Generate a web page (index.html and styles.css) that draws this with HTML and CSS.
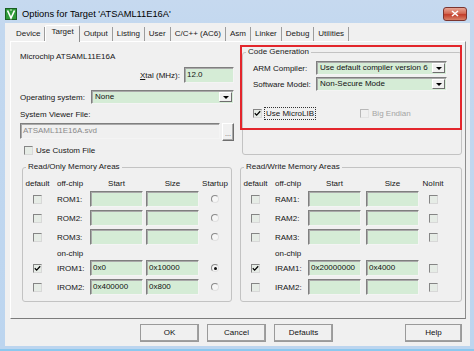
FILE: index.html
```html
<!DOCTYPE html>
<html>
<head>
<meta charset="utf-8">
<title>Options for Target</title>
<link rel="stylesheet" href="styles.css">
</head>
<body>
<div class="window">
  <div class="titlebar">
    <svg class="appicon" viewBox="0 0 12 12" width="12" height="12">
      <rect x="0.5" y="0.5" width="11" height="11" fill="#2f9a3a" stroke="#1b5e22"/>
      <path d="M2.5 2.5 L6 10 L9.5 2.5" fill="none" stroke="#fff" stroke-width="1.6"/>
      <path d="M5 2 L7 2" stroke="#cfe9c0" stroke-width="1"/>
    </svg>
    <span class="title">Options for Target 'ATSAML11E16A'</span>
    <div class="close">
      <svg viewBox="0 0 8 7" width="8" height="7"><path d="M1 1 L7 6 M7 1 L1 6" stroke="#fff" stroke-width="1.6"/></svg>
    </div>
  </div>

  <div class="client">
    <div class="tabs">
      <span class="tab">Device</span>
      <span class="tab active">Target</span>
      <span class="tab">Output</span>
      <span class="tab">Listing</span>
      <span class="tab">User</span>
      <span class="tab">C/C++ (AC6)</span>
      <span class="tab">Asm</span>
      <span class="tab">Linker</span>
      <span class="tab">Debug</span>
      <span class="tab">Utilities</span>
    </div>

    <div class="panel">
      <div class="top">
        <div class="leftcol">
          <div class="device">Microchip ATSAML11E16A</div>
          <div class="xtal-row">
            <span class="xtal-lbl"><u>X</u>tal (MHz):</span>
            <div class="field xtal-in">12.0</div>
          </div>
          <div class="os-row">
            <span class="os-lbl">Operating system:</span>
            <div class="select os-sel"><span class="sel-text">None</span><span class="arrow"></span></div>
          </div>
          <div class="svf-lbl">System Viewer File:</div>
          <div class="svf-row">
            <div class="field disabled svf-in">ATSAML11E16A.svd</div>
            <div class="dots">...</div>
          </div>
          <div class="custom-row">
            <span class="cb"></span><span class="cb-lbl">Use Custom File</span>
          </div>
        </div>

        <fieldset class="group codegen">
          <legend>Code Generation</legend>
          <div class="cg-body">
            <div class="cg-row">
              <span class="cg-lbl">ARM Compiler:</span>
              <div class="select cg-sel"><span class="sel-text">Use default compiler version 6</span><span class="arrow"></span></div>
            </div>
            <div class="cg-row second">
              <span class="cg-lbl">Software Model:</span>
              <div class="select cg-sel"><span class="sel-text">Non-Secure Mode</span><span class="arrow"></span></div>
            </div>
            <div class="cg-checks">
              <span class="cb checked"><svg viewBox="0 0 9 9" width="7" height="7"><path d="M1 4.2 L3.4 6.6 L8 1.6" fill="none" stroke="#000" stroke-width="1.6"/></svg></span>
              <span class="cb-lbl focus">Use MicroLIB</span>
              <span class="cb off"></span>
              <span class="cb-lbl grey">Big Endian</span>
            </div>
          </div>
        </fieldset>
      </div>

      <div class="mem">
        <fieldset class="group ro">
          <legend>Read/Only Memory Areas</legend>
          <div class="memgrid ro-grid">
            <span class="hd c">default</span><span class="hd l">off-chip</span><span class="hd in">Start</span><span class="hd in">Size</span><span class="hd c">Startup</span>

            <span class="cell c"><span class="cb"></span></span><span class="cell l">ROM1:</span><span class="field mem-in"></span><span class="field mem-in"></span><span class="cell c"><span class="radio"></span></span>
            <span class="cell c"><span class="cb"></span></span><span class="cell l">ROM2:</span><span class="field mem-in"></span><span class="field mem-in"></span><span class="cell c"><span class="radio"></span></span>
            <span class="cell c"><span class="cb"></span></span><span class="cell l">ROM3:</span><span class="field mem-in"></span><span class="field mem-in"></span><span class="cell c"><span class="radio"></span></span>

            <span class="onchip">on-chip</span>

            <span class="cell c"><span class="cb checked"><svg viewBox="0 0 9 9" width="7" height="7"><path d="M1 4.2 L3.4 6.6 L8 1.6" fill="none" stroke="#000" stroke-width="1.6"/></svg></span></span><span class="cell l">IROM1:</span><span class="field mem-in">0x0</span><span class="field mem-in">0x10000</span><span class="cell c"><span class="radio on"></span></span>
            <span class="cell c"><span class="cb"></span></span><span class="cell l">IROM2:</span><span class="field mem-in">0x400000</span><span class="field mem-in">0x800</span><span class="cell c"><span class="radio"></span></span>
          </div>
        </fieldset>

        <fieldset class="group rw">
          <legend>Read/Write Memory Areas</legend>
          <div class="memgrid rw-grid">
            <span class="hd c">default</span><span class="hd l">off-chip</span><span class="hd in">Start</span><span class="hd in">Size</span><span class="hd c">NoInit</span>

            <span class="cell c"><span class="cb"></span></span><span class="cell l">RAM1:</span><span class="field mem-in"></span><span class="field mem-in"></span><span class="cell c"><span class="cb"></span></span>
            <span class="cell c"><span class="cb"></span></span><span class="cell l">RAM2:</span><span class="field mem-in"></span><span class="field mem-in"></span><span class="cell c"><span class="cb"></span></span>
            <span class="cell c"><span class="cb"></span></span><span class="cell l">RAM3:</span><span class="field mem-in"></span><span class="field mem-in"></span><span class="cell c"><span class="cb"></span></span>

            <span class="onchip">on-chip</span>

            <span class="cell c"><span class="cb checked"><svg viewBox="0 0 9 9" width="7" height="7"><path d="M1 4.2 L3.4 6.6 L8 1.6" fill="none" stroke="#000" stroke-width="1.6"/></svg></span></span><span class="cell l">IRAM1:</span><span class="field mem-in">0x20000000</span><span class="field mem-in">0x4000</span><span class="cell c"><span class="cb"></span></span>
            <span class="cell c"><span class="cb"></span></span><span class="cell l">IRAM2:</span><span class="field mem-in"></span><span class="field mem-in"></span><span class="cell c"><span class="cb"></span></span>
          </div>
        </fieldset>
      </div>
    </div>

    <div class="buttons">
      <div class="btn">OK</div>
      <div class="btn">Cancel</div>
      <div class="btn">Defaults</div>
      <div class="btn help">Help</div>
    </div>
  </div>

  <div class="redbox"></div>
</div>
</body>
</html>
```
FILE: styles.css
```css
* { box-sizing: border-box; }
html, body { margin: 0; padding: 0; }
body {
  width: 474px;
  height: 351px;
  overflow: hidden;
  font-family: "Liberation Sans", Arial, sans-serif;
  font-size: 8px;
  color: #151515;
  background: #c4d8ef;
}
.window {
  position: relative;
  width: 474px;
  height: 351px;
  display: flex;
  flex-direction: column;
  background: linear-gradient(to bottom, #c6d9ef 0, #c3d8ef 30px, #bcd5ef 100%);
  border-bottom: 2px solid #8cc8ee;
}

/* title bar */
.titlebar {
  height: 23px;
  flex: none;
  display: flex;
  align-items: center;
  padding: 4px 7px 0 5px;
}
.appicon { flex: none; display: block; }
.title { margin-left: 5px; font-size: 9.3px; color: #000; }
.close {
  margin-left: auto;
  width: 24px;
  height: 14px;
  border: 1px solid #7a3530;
  border-radius: 3px;
  background: linear-gradient(#e7a595 0, #d46a55 45%, #c23d2a 55%, #d9836a 100%);
  display: flex;
  align-items: center;
  justify-content: center;
}
.close svg { display: block; }

/* client */
.client {
  flex: 1;
  margin: 0 4px 3px 5px;
  background: #f0f0f0;
  display: flex;
  flex-direction: column;
}

/* tabs */
.tabs {
  height: 18px;
  padding: 2px 0 0 7px;
  display: flex;
  align-items: flex-end;
  flex: none;
}
.tab {
  height: 14px;
  line-height: 13px;
  padding: 0 4px;
  border-right: 1px solid #9c9c9c;
  color: #1a1a1a;
}
.tab.active {
  position: relative;
  z-index: 1;
  height: 17px;
  line-height: 12px;
  margin-bottom: -1px;
  padding: 0 5px;
  background: #f0f0f0;
  border-top: 1px solid #fff;
  border-left: 1px solid #fff;
  border-right: 1px solid #8d8d8d;
  border-radius: 2px 2px 0 0;
}

/* panel */
.panel {
  margin: 0 4px 0 5px;
  height: 278px;
  flex: none;
  border: 1px solid;
  border-color: #fff #8d8d8d #7c7c7c #fff;
  padding: 5px 3px 0 9px;
}
.top { display: flex; gap: 8px; }
.leftcol { width: 214px; flex: none; }
.device { margin-top: 4px; height: 12px; line-height: 12px; }
.xtal-row {
  margin-top: 4px;
  height: 16px;
  display: flex;
  justify-content: flex-end;
  align-items: center;
}
.xtal-lbl { margin-right: 4px; }
.xtal-in { width: 50px; height: 16px; }
.os-row { margin-top: 7px; height: 14px; display: flex; align-items: center; }
.os-lbl { flex: 1; }
.os-sel { width: 143px; }
.svf-lbl { margin-top: 5px; height: 12px; line-height: 12px; }
.svf-row { margin-top: 2px; display: flex; gap: 2px; align-items: flex-start; }
.svf-in { width: 200px; height: 16px; }
.dots {
  width: 12px;
  height: 18px;
  border: 1px solid;
  border-color: #fff #6e6e6e #6e6e6e #fff;
  box-shadow: inset -1px -1px 0 #a9a9a9;
  text-align: center;
  line-height: 20px;
  font-size: 7px;
  color: #555;
}
.custom-row { margin-top: 3px; height: 12px; padding-left: 4px; display: flex; align-items: center; }
.custom-row .cb-lbl { margin-left: 3px; }

/* fields */
.field {
  display: block;
  background: #d5ecd6;
  border: 1px solid;
  border-color: #7f7f7f #f4f4f4 #f4f4f4 #7f7f7f;
  box-shadow: inset 1px 1px 0 #a9a9a9;
  padding: 1px 0 0 2px;
  line-height: 11px;
  white-space: nowrap;
  overflow: hidden;
  color: #111;
}
.field.disabled { background: #f0f0f0; color: #8a8a8a; }
.select {
  height: 14px;
  display: flex;
  align-items: stretch;
  background: #d5ecd6;
  border: 1px solid;
  border-color: #7f7f7f #f4f4f4 #f4f4f4 #7f7f7f;
  box-shadow: inset 1px 1px 0 #a9a9a9;
}
.sel-text { flex: 1; padding-left: 3px; line-height: 12px; white-space: nowrap; overflow: hidden; color: #111; }
.arrow {
  width: 13px;
  margin: 1px 1px 1px 0;
  background: #f0f0f0;
  border: 1px solid;
  border-color: #fff #6e6e6e #6e6e6e #fff;
  position: relative;
}
.arrow::after {
  content: "";
  position: absolute;
  left: 3px;
  top: 3px;
  border-left: 3px solid transparent;
  border-right: 3px solid transparent;
  border-top: 3px solid #000;
}

/* checkboxes, radios */
.cb {
  display: inline-flex;
  align-items: center;
  justify-content: center;
  width: 9px;
  height: 9px;
  flex: none;
  border: 1px solid;
  border-color: #858585 #d8d8d8 #d8d8d8 #858585;
  background: #e6ece6;
}
.cb svg { display: block; }
.cb.off { border-color: #b8b8b8 #e4e4e4 #e4e4e4 #b8b8b8; background: #f0f0f0; }
.radio {
  display: inline-block;
  width: 8px;
  height: 8px;
  border-radius: 50%;
  border: 1px solid;
  border-color: #8a8a8a #e0e0e0 #e0e0e0 #8a8a8a;
  background: #f6f6f6;
  position: relative;
}
.radio.on::after {
  content: "";
  position: absolute;
  left: 1.5px;
  top: 1.5px;
  width: 3px;
  height: 3px;
  border-radius: 50%;
  background: #111;
}

/* groups */
.group {
  margin: 0;
  padding: 0;
  min-width: 0;
  border: 1px solid #c3c3c3;
  border-radius: 3px;
}
.group legend {
  padding: 0 2px;
  margin-left: 3px;
  line-height: 10px;
  font-size: 8px;
  color: #1a1a1a;
}
.codegen { width: 220px; height: 108px; flex: none; }
.cg-body { padding: 4px 0 0 10px; }
.cg-row { height: 14px; display: flex; align-items: center; }
.cg-row.second { margin-top: 2px; }
.cg-lbl { width: 63px; flex: none; }
.cg-sel { width: 131px; }
.cg-checks { margin-top: 16px; height: 13px; display: flex; align-items: center; }
.cb-lbl { white-space: nowrap; }
.cg-checks .focus {
  margin-left: 2px;
  padding: 0 1px;
  height: 13px;
  line-height: 11px;
  border: 1px dotted #333;
}
.cg-checks .cb.off { margin-left: 44px; }
.cg-checks .grey { margin-left: 3px; color: #a4a4a4; }

/* memory areas */
.mem { display: flex; gap: 8px; margin: 6px 0 0 2px; align-items: flex-start; }
.ro { width: 210px; height: 140px; flex: none; }
.rw { width: 222px; height: 140px; flex: none; }
.memgrid {
  display: grid;
  padding-top: 5px;
  grid-template-rows: 14px 19px 19px 19px 12px 19px 19px;
}
.ro-grid { grid-template-columns: 29px 38px 56px 53px 32px; }
.rw-grid { grid-template-columns: 29px 38px 58px 53px 28px; }
.hd { align-self: center; white-space: nowrap; line-height: 10px; }
.hd.c { justify-self: center; }
.hd.l { padding-left: 5px; }
.hd.in { width: 53px; text-align: center; }
.cell { height: 16px; display: flex; align-items: center; }
.cell.c { justify-content: center; }
.cell.l { padding-left: 5px; }
.mem-in { width: 53px; height: 16px; }
.onchip {
  grid-column: 1 / -1;
  padding-left: 34px;
  line-height: 10px;
  align-self: center;
}

/* buttons */
.buttons {
  margin-top: 5px;
  padding: 0 8px 0 135px;
  display: flex;
  gap: 8px;
}
.btn {
  width: 59px;
  height: 18px;
  border: 1px solid;
  border-color: #fff #6a6a6a #6a6a6a #fff;
  box-shadow: inset -1px -1px 0 #a0a0a0;
  outline: 1px solid #9a9a9a;
  outline-offset: -1px;
  background: #f0f0f0;
  text-align: center;
  line-height: 16px;
  color: #111;
}
.btn.help { margin-left: auto; width: 57px; }

/* red annotation rectangle */
.redbox {
  position: absolute;
  left: 240px;
  top: 45px;
  width: 222px;
  height: 85px;
  border: 2px solid #e3262c;
  pointer-events: none;
}
```
